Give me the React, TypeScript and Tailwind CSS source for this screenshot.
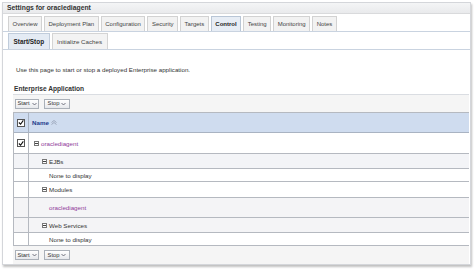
import React from "react";

const F = { fontFamily: '"Liberation Sans", Arial, sans-serif' };

function Check() {
  return (
    <div className="w-[8px] h-[8px] border border-[#555] bg-white flex items-center justify-center">
      <svg width="7" height="7" viewBox="0 0 7 7">
        <path d="M1 3.5 L3 5.5 L6.2 1" stroke="#111" strokeWidth="1.3" fill="none" />
      </svg>
    </div>
  );
}

function Minus() {
  return (
    <div className="w-[5px] h-[5px] border border-[#777] bg-white flex items-center justify-center mr-[2px]">
      <div className="w-[3px] h-[1px] bg-[#444]" />
    </div>
  );
}

function Btn({ label, w }: { label: string; w: string }) {
  return (
    <div className={`${w} h-[10px] border border-[#aab0b8] bg-gradient-to-b from-white to-[#e6e8ec] flex items-center justify-center gap-[2px] text-[5.8px] text-[#333]`}>
      <span>{label}</span>
      <svg width="5" height="4" viewBox="0 0 5 4">
        <path d="M0.5 1 L2.5 3 L4.5 1" stroke="#556" strokeWidth="0.8" fill="none" />
      </svg>
    </div>
  );
}

function Row({ h, bg, children, first }: { h: string; bg: string; children?: React.ReactNode; first?: React.ReactNode }) {
  return (
    <div className={`flex ${h} ${bg} border-b border-[#b5b9c0]`}>
      <div className="w-[15px] border-r border-[#b5b9c0] flex items-center justify-center">{first}</div>
      <div className="flex-1 flex items-center">{children}</div>
    </div>
  );
}

export default function App() {
  const tabs = ["Overview", "Deployment Plan", "Configuration", "Security", "Targets", "Control", "Testing", "Monitoring", "Notes"];
  return (
    <div style={F} className="w-[474px] h-[279px] bg-white pt-[2px] pl-[2px] text-[#333]">
      <div className="w-[469px] h-[263px] border border-[#d4d6da] bg-white shadow-[1px_2px_2px_rgba(0,0,0,0.25)] flex flex-col">
        <div className="h-[14px] bg-gradient-to-b from-[#f4f5f6] to-[#e9eaec] border-b border-[#d9dadc] flex items-center pl-[4px] text-[6.8px] font-bold text-[#333]">
          Settings for oraclediagent
        </div>
        <div className="flex items-end pl-[5px] pt-[2px] border-b border-[#c9d3e0] gap-[2px]">
          {tabs.map((t) => (
            <div
              key={t}
              className={`h-[15px] px-[3.5px] flex items-center text-[6px] border border-b-0 ${
                t === "Control"
                  ? "bg-[#e7edf5] border-[#b9c6d6] font-bold text-[#222]"
                  : "bg-[#f2f2f2] border-[#d2d2d2] text-[#444]"
              }`}
            >
              {t}
            </div>
          ))}
        </div>
        <div className="flex items-end pl-[5px] pt-[1px] border-b border-[#c9d3e0] gap-[2px]">
          <div className="h-[16px] px-[4.5px] flex items-center text-[6.4px] font-bold bg-[#e4ebf4] border border-b-0 border-[#c0ccdb] text-[#222]">Start/Stop</div>
          <div className="h-[16px] px-[4.5px] flex items-center text-[6.2px] bg-[#f3f3f3] border border-b-0 border-[#d4d4d4] text-[#444]">Initialize Caches</div>
        </div>
        <div className="pl-[13px] pt-[16px] text-[6.2px] text-[#333] leading-[7px]">Use this page to start or stop a deployed Enterprise application.</div>
        <div className="pl-[11px] pt-[12px] text-[6.6px] font-bold text-[#333] leading-[7px]">Enterprise Application</div>
        <div className="ml-[10px] mr-[1px] mt-[2px] flex flex-col">
          <div className="h-[18px] border-t border-[#dadde2] bg-[#f5f5f5] flex items-center gap-[5px] pl-[2px]">
            <Btn label="Start" w="w-[24px]" />
            <Btn label="Stop" w="w-[26px]" />
          </div>
          <div className="border-t border-l border-[#b5b9c0]">
            <div className="flex h-[20px] bg-[#cfdcef] border-b border-[#a9b3c2]">
              <div className="w-[15px] border-r border-[#a9b3c2] flex items-center justify-center"><Check /></div>
              <div className="flex items-center pl-[3px] gap-[2px] text-[6.2px] font-bold text-[#1c3a8c]">
                Name
                <svg width="6" height="5" viewBox="0 0 6 5">
                  <path d="M0.5 2.5 L3 0.5 L5.5 2.5 M0.5 4.5 L3 2.5 L5.5 4.5" stroke="#8a94a8" strokeWidth="0.7" fill="none" />
                </svg>
              </div>
            </div>
            <Row h="h-[21px]" bg="bg-white" first={<Check />}>
              <div className="pl-[5px] flex items-center text-[6.2px] text-[#8e3a99]"><Minus />oraclediagent</div>
            </Row>
            <Row h="h-[15px]" bg="bg-[#f3f4f7]">
              <div className="pl-[13px] flex items-center text-[6.2px] text-[#333]"><Minus />EJBs</div>
            </Row>
            <Row h="h-[13px]" bg="bg-white">
              <div className="pl-[20px] text-[6.2px] text-[#333]">None to display</div>
            </Row>
            <Row h="h-[16px]" bg="bg-white">
              <div className="pl-[13px] flex items-center text-[6.2px] text-[#333]"><Minus />Modules</div>
            </Row>
            <Row h="h-[20px]" bg="bg-[#f4f4f6]">
              <div className="pl-[20px] text-[6.2px] text-[#8e3a99]">oraclediagent</div>
            </Row>
            <Row h="h-[15px]" bg="bg-[#f4f4f6]">
              <div className="pl-[13px] flex items-center text-[6.2px] text-[#333]"><Minus />Web Services</div>
            </Row>
            <Row h="h-[13px]" bg="bg-white">
              <div className="pl-[20px] text-[6.2px] text-[#333]">None to display</div>
            </Row>
          </div>
          <div className="h-[18px] bg-[#f5f5f5] flex items-center gap-[5px] pl-[2px]">
            <Btn label="Start" w="w-[24px]" />
            <Btn label="Stop" w="w-[26px]" />
          </div>
        </div>
      </div>
    </div>
  );
}
